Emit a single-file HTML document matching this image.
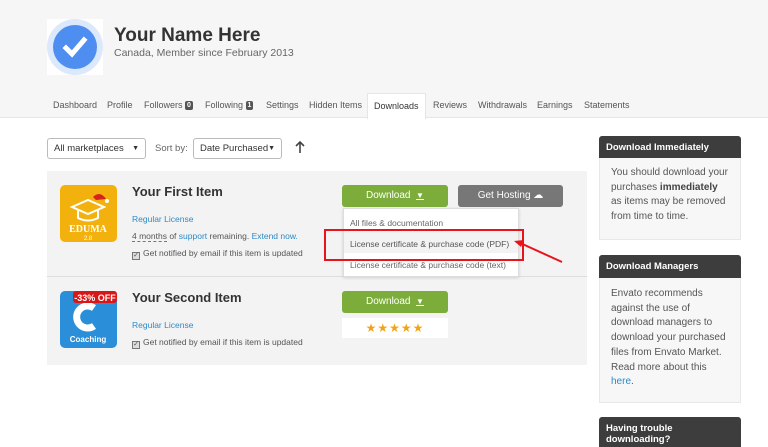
<!DOCTYPE html>
<html><head><meta charset="utf-8"><style>
*{margin:0;padding:0;box-sizing:border-box}
body{width:768px;height:439px;overflow:hidden;background:#fff;font-family:"Liberation Sans",Arial,sans-serif;color:#333;position:relative}
.a{position:absolute}
.hdr{left:0;top:0;width:768px;height:118px;background:#f6f6f6;border-bottom:1px solid #e6e6e6}
.tab{position:absolute;top:100px;font-size:9px;color:#555}
.badge{display:inline-block;background:#555;color:#fff;font-size:7px;padding:1px 2px;border-radius:2px;font-weight:bold;vertical-align:1px}
.sel{border:1px solid #bbb;border-radius:3px;background:#fff;font-size:9.5px;height:21px;line-height:19px;padding-left:6px}
.btn{border-radius:3px;color:#fff;font-size:10px;text-align:center;line-height:22px;height:22px}
.link{color:#2d8ac7}
.small{font-size:8.5px;color:#555}
.sh{background:#3d3d3d;color:#fff;font-weight:bold;font-size:9.5px;padding:6px 7px;border-radius:3px 3px 0 0;height:22px}
.sb{background:#f7f7f7;border:1px solid #e8e8e8;border-top:none;padding:8px 11px;font-size:10px;line-height:14.7px;color:#555}
.cb{display:inline-block;width:8px;height:8px;border:1px solid #777;background:#ddd;vertical-align:-1px;margin-right:3px;font-size:7px;line-height:6px;text-align:center}
</style></head><body>
<div class="a hdr"></div>
<div class="a" style="left:47px;top:19px;width:56px;height:56px;background:#fff"></div>
<div class="a" style="left:47px;top:19px;width:56px;height:56px;border-radius:50%;background:#dce8fb"></div>
<div class="a" style="left:53px;top:25px;width:44px;height:44px;border-radius:50%;background:#4e8ef0"></div>
<svg class="a" style="left:53px;top:25px" width="44" height="44"><path d="M13 23 L19 29 L31 15" stroke="#fff" stroke-width="5" fill="none" stroke-linecap="square"/></svg>
<div class="a" style="left:114px;top:25px;font-size:19px;font-weight:bold;color:#333">Your Name Here</div>
<div class="a" style="left:114px;top:47px;font-size:10.5px;color:#666">Canada, Member since February 2013</div>
<div class="a" style="left:367px;top:93px;width:59px;height:26px;background:#fff;border:1px solid #e6e6e6;border-bottom:none"></div>
<div class="tab" style="left:53px">Dashboard</div>
<div class="tab" style="left:107px">Profile</div>
<div class="tab" style="left:144px">Followers <span class="badge">0</span></div>
<div class="tab" style="left:205px">Following <span class="badge">1</span></div>
<div class="tab" style="left:266px">Settings</div>
<div class="tab" style="left:309px">Hidden Items</div>
<div class="tab" style="left:374px;top:101px;color:#333">Downloads</div>
<div class="tab" style="left:433px">Reviews</div>
<div class="tab" style="left:478px">Withdrawals</div>
<div class="tab" style="left:537px">Earnings</div>
<div class="tab" style="left:584px">Statements</div>

<div class="a sel" style="left:47px;top:138px;width:99px">All marketplaces<span style="position:absolute;right:6px;font-size:7px">▼</span></div>
<div class="a" style="left:155px;top:143px;font-size:9.5px;color:#666">Sort by:</div>
<div class="a sel" style="left:193px;top:138px;width:89px">Date Purchased<span style="position:absolute;right:6px;font-size:7px">▼</span></div>
<svg class="a" style="left:294px;top:140px" width="12" height="14"><path d="M6 13 V2 M2 6 L6 2 L10 6" stroke="#444" stroke-width="1.6" fill="none"/></svg>

<div class="a" style="left:47px;top:171px;width:540px;height:194px;background:#f3f3f3"></div>
<div class="a" style="left:47px;top:276px;width:540px;height:1px;background:#ddd"></div>

<div class="a" style="left:60px;top:185px;width:57px;height:57px;border-radius:5px;background:#f2b10c"></div>
<svg class="a" style="left:60px;top:185px" width="57" height="57"><path d="M12 22 L28 15 L44 22 L28 29Z M18 25 V33 Q28 38 38 33 V25" fill="none" stroke="#fff" stroke-width="2"/><path d="M33 12 Q40 5 46 14 L36 15Z" fill="#d82020"/><circle cx="47" cy="16" r="2" fill="#fff"/><text x="28" y="47" font-size="10" font-weight="bold" fill="#fff" text-anchor="middle" font-family="Liberation Serif">EDUMA</text><text x="28" y="55" font-size="6" fill="#fff" text-anchor="middle">2.8</text></svg>
<div class="a" style="left:132px;top:184px;font-size:13px;font-weight:bold">Your First Item</div>
<div class="a small link" style="left:132px;top:214px;color:#2d8ac7">Regular License</div>
<div class="a small" style="left:132px;top:231px"><span style="border-bottom:1px dashed #777">4 months</span> of <span class="link">support</span> remaining. <span class="link">Extend now.</span></div>
<div class="a small" style="left:132px;top:248px"><span class="cb">✓</span>Get notified by email if this item is updated</div>

<div class="a" style="left:60px;top:291px;width:57px;height:57px;border-radius:5px;background:#2a8ed8"></div>
<svg class="a" style="left:60px;top:291px" width="57" height="57"><path d="M34 17 A11 11 0 1 0 34 35" fill="none" stroke="#fff" stroke-width="7"/><rect x="13" y="0" width="44" height="12" rx="3" fill="#d81818"/><text x="35" y="10" font-size="9" font-weight="bold" fill="#fff" text-anchor="middle">-33% OFF</text><text x="28" y="51" font-size="8" font-weight="bold" fill="#fff" text-anchor="middle">Coaching</text></svg>
<div class="a" style="left:132px;top:290px;font-size:13px;font-weight:bold">Your Second Item</div>
<div class="a small" style="left:132px;top:320px;color:#2d8ac7">Regular License</div>
<div class="a small" style="left:132px;top:337px"><span class="cb">✓</span>Get notified by email if this item is updated</div>

<div class="a btn" style="left:342px;top:185px;width:106px;background:#7cac3a">Download&nbsp; <b style="font-size:8px;text-decoration:underline">▼</b></div>
<div class="a btn" style="left:458px;top:185px;width:105px;background:#777">Get Hosting &#9729;</div>
<div class="a" style="left:343px;top:208px;width:176px;height:69px;background:#fff;border:1px solid #ddd;box-shadow:0 1px 3px rgba(0,0,0,.15)"></div>
<div class="a" style="left:344px;top:231px;width:174px;height:22px;background:#f3f3f3"></div>
<div class="a small" style="left:350px;top:218px;color:#666">All files &amp; documentation</div>
<div class="a small" style="left:350px;top:239px;color:#555">License certificate &amp; purchase code (PDF)</div>
<div class="a small" style="left:350px;top:260px;color:#666">License certificate &amp; purchase code (text)</div>
<div class="a" style="left:324px;top:229px;width:200px;height:32px;border:2px solid #e8141b"></div>
<svg class="a" style="left:510px;top:235px" width="55" height="35"><path d="M8 7 L52 27" stroke="#e8141b" stroke-width="2"/><path d="M4 6 L14 5 L11 12Z" fill="#e8141b"/></svg>

<div class="a btn" style="left:342px;top:291px;width:106px;background:#7cac3a">Download&nbsp; <b style="font-size:8px;text-decoration:underline">▼</b></div>
<div class="a" style="left:342px;top:318px;width:106px;height:20px;background:#fff;color:#f0a41c;font-size:12px;text-align:center;line-height:20px;letter-spacing:1px">★★★★★</div>

<div class="a" style="left:599px;top:136px;width:142px">
<div class="sh">Download Immediately</div>
<div class="sb" style="height:82px">You should download your purchases <b style="color:#444">immediately</b> as items may be removed from time to time.</div>
</div>
<div class="a" style="left:599px;top:255px;width:142px">
<div class="sh" style="height:23px">Download Managers</div>
<div class="sb" style="height:125px;padding-top:9px">Envato recommends against the use of download managers to download your purchased files from Envato Market. Read more about this <span class="link">here</span>.</div>
</div>
<div class="a" style="left:599px;top:417px;width:142px">
<div class="sh" style="height:30px;line-height:11px">Having trouble downloading?</div>
</div>
</body></html>
